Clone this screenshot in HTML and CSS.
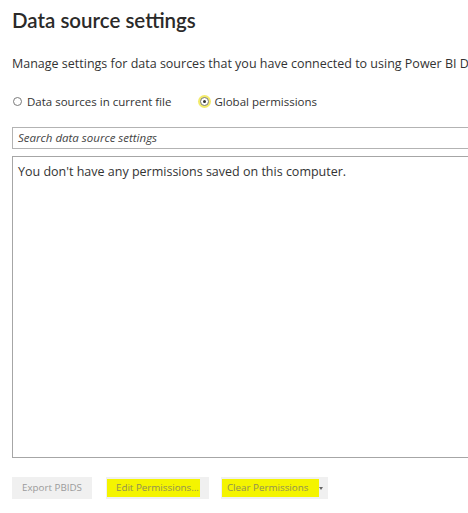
FILE: index.html
```html
<!DOCTYPE html>
<html>
<head>
<meta charset="utf-8">
<link rel="stylesheet" href="styles.css">
</head>
<body>
<div class="page">
  <h1 class="title">Data source settings</h1>
  <p class="desc">Manage settings for data sources that you have connected to using Power BI Desktop.</p>
  <div class="radios">
    <label class="radio"><span class="dot"></span>Data sources in current file</label>
    <label class="radio selected"><span class="dot"></span>Global permissions</label>
  </div>
  <div class="search">Search data source settings</div>
  <div class="list">You don't have any permissions saved on this computer.</div>
  <div class="buttons">
    <div class="btn">Export PBIDS</div>
    <div class="btn hlbtn edit"><span class="hl">Edit Permissions...</span></div>
    <div class="btn hlbtn split"><span class="hl">Clear Permissions</span><span class="caret"></span></div>
  </div>
</div>
</body>
</html>
```
FILE: styles.css
```css
html, body {
  margin: 0;
  padding: 0;
  background: #ffffff;
  overflow: hidden;
}
.page {
  width: 468px;
  height: 513px;
  overflow: hidden;
  padding-left: 12px;
  box-sizing: border-box;
  font-family: "Open Sans", "Noto Sans", sans-serif;
  color: #333333;
}
.title {
  margin: 0;
  padding-top: 6px;
  font-family: "Lato", "Open Sans", sans-serif;
  font-size: 20.5px;
  line-height: 28px;
  font-weight: 600;
  color: #2b2a29;
  white-space: nowrap;
}
.desc {
  margin: 21px 0 0 0;
  font-size: 12.5px;
  line-height: 18px;
  white-space: nowrap;
  color: #333;
}
.radios {
  display: flex;
  gap: 28px;
  margin-top: 19px;
  height: 18px;
  align-items: center;
  font-size: 11.5px;
}
.radio {
  display: flex;
  align-items: center;
  gap: 5px;
  padding-left: 1px;
}
.dot {
  width: 7px;
  height: 7px;
  border: 1.3px solid #7a7a7a;
  border-radius: 50%;
  box-sizing: content-box;
  position: relative;
}
.selected .dot {
  background: #fff;
  box-shadow: 0 0 0 2px #f3eb6a;
}
.selected .dot::after {
  content: "";
  position: absolute;
  left: 2px;
  top: 2px;
  width: 3px;
  height: 3px;
  border-radius: 50%;
  background: #333;
}
.search {
  margin-top: 17px;
  width: 600px;
  height: 22px;
  border: 1px solid #b3b3b3;
  box-sizing: border-box;
  padding-left: 5px;
  font-size: 11.5px;
  line-height: 20px;
  font-style: italic;
  color: #444;
}
.list {
  margin-top: 7px;
  width: 600px;
  height: 302px;
  border: 1px solid #a6a6a6;
  box-sizing: border-box;
  padding: 6px 5px;
  font-size: 12.5px;
  line-height: 18px;
  color: #333;
}
.buttons {
  display: flex;
  gap: 14px;
  margin-top: 19px;
}
.btn {
  height: 22px;
  background: #f0f0f0;
  color: #9b9b9b;
  font-size: 9.8px;
  line-height: 22px;
  padding: 0 10px 0 10px;
  display: flex;
  align-items: center;
  white-space: nowrap;
}
.hl {
  background: #f4f400;
  line-height: 18px;
  color: #8f8f55;
}
.edit {
  padding: 0 9px 0 1px;
}
.edit .hl {
  padding: 0 1px 0 9px;
}
.split {
  margin-left: -2px;
  padding: 0 5px 0 1px;
}
.split .hl {
  padding: 0 11px 0 5px;
}
.caret {
  width: 0;
  height: 0;
  border-left: 2.5px solid transparent;
  border-right: 2.5px solid transparent;
  border-top: 3px solid #666;
}
```
